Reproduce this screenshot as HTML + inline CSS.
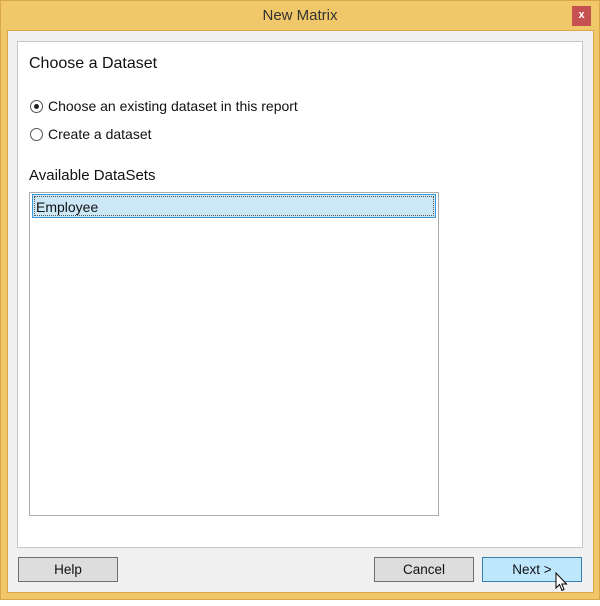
<!DOCTYPE html>
<html><head><style>
body{margin:0;width:600px;height:606px;background:#fff;position:relative;font-family:"Liberation Sans",sans-serif;overflow:hidden}
.win{position:absolute;left:0;top:0;width:598px;height:598px;background:#f0c86a;border:1px solid #d9a746}
.title{position:absolute;left:0;top:7px;width:600px;text-align:center;font-size:15px;color:#333}
.close{position:absolute;left:572px;top:6px;width:19px;height:20px;background:#c75050;color:#fff;font-size:11px;font-weight:bold;text-align:center;line-height:19px}
.client{position:absolute;left:7px;top:30px;width:585px;height:561px;background:#f0f0f0;border:1px solid #d9a746}
.panel{position:absolute;left:17px;top:41px;width:564px;height:505px;background:#fff;border:1px solid #c8c8c8}
.t{position:absolute;font-size:14px;color:#111;white-space:nowrap}
.radio{position:absolute;width:11px;height:11px;border:1px solid #555;border-radius:50%;background:#fff}
.list{position:absolute;left:29px;top:192px;width:408px;height:322px;border:1px solid #acacac;background:#fff}
.sel{position:absolute;left:32px;top:194px;width:402px;height:22px;background:#cce8f6;border:1px solid #3b9ad9;outline:1px dotted #555;outline-offset:-3px}
.btn{position:absolute;top:557px;width:98px;height:23px;background:#dddddd;border:1px solid #707070;font-size:13.5px;text-align:center;line-height:24px;color:#111}
</style></head><body>
<div class="win"></div>
<div class="title">New Matrix</div>
<div class="close">x</div>
<div class="client"></div>
<div class="panel"></div>
<div class="t" style="left:29px;top:55px;font-size:16px">Choose a Dataset</div>
<div class="radio" style="left:30px;top:100px"></div>
<div style="position:absolute;left:34px;top:104px;width:5px;height:5px;border-radius:50%;background:#222"></div>
<div class="t" style="left:48px;top:98px">Choose an existing dataset in this report</div>
<div class="radio" style="left:30px;top:128px"></div>
<div class="t" style="left:48px;top:126px">Create a dataset</div>
<div class="t" style="left:29px;top:167px;font-size:15px">Available DataSets</div>
<div class="list"></div>
<div class="sel"></div>
<div class="t" style="left:36px;top:199px">Employee</div>
<div class="btn" style="left:18px">Help</div>
<div class="btn" style="left:374px">Cancel</div>
<div class="btn" style="left:482px;background:#bee6fd;border-color:#3c7fb1">Next &gt;</div>
<svg style="position:absolute;left:555px;top:572px" width="14" height="22" viewBox="0 0 14 22"><path d="M1 1 L1 16 L4.5 12.5 L7 18.5 L9 17.5 L6.8 12 L11.5 12 Z" fill="#fff" stroke="#000" stroke-width="1"/></svg>
</body></html>
